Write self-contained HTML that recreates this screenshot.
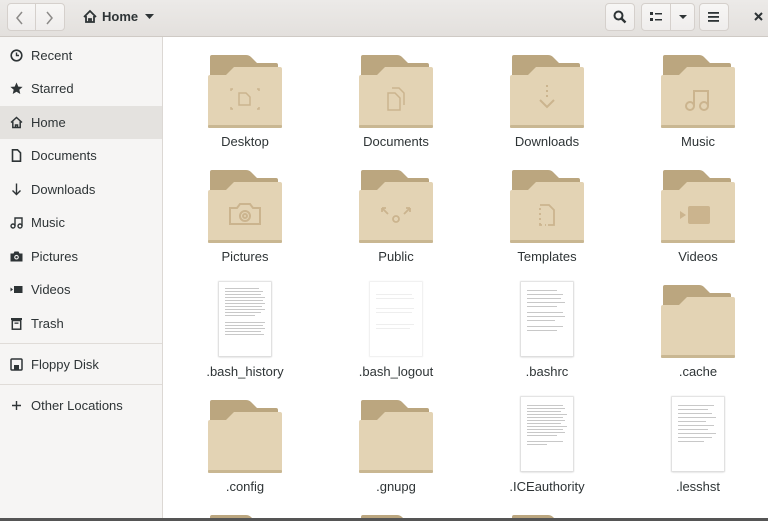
<!DOCTYPE html>
<html><head><meta charset="utf-8"><style>
*{margin:0;padding:0;box-sizing:border-box}
html,body{width:768px;height:521px;overflow:hidden}
body{background:#fff;font-family:"Liberation Sans",sans-serif;color:#2e3436}
#wrap{position:relative;width:768px;height:521px;overflow:hidden}
#hb{position:absolute;left:0;top:0;width:768px;height:37px;background:linear-gradient(#eceae8,#e3e0dd);border-bottom:1px solid #cfcac5}
.btn{position:absolute;top:3px;height:28px;background:linear-gradient(#f7f6f5,#efedec);border:1px solid #d5d0cc;border-radius:4px}
#side{position:absolute;left:0;top:37px;width:163px;height:482px;background:#f6f5f4;border-right:1px solid #dcd8d4}
.si{position:absolute;left:0;width:162px;height:33px;font-size:13px;line-height:33px;padding-left:31px;color:#2e3436}
.si svg{position:absolute;left:10px;top:10px}
.sep{position:absolute;left:0;width:162px;height:1px;background:#e0dcd8}
.it{position:absolute;width:140px;text-align:center;font-size:13px;color:#2e3436}
.f{position:absolute;width:74px;height:74px}
.doc{position:absolute;width:52px;height:74px;background:#fff;box-shadow:0 0 1px 1px #ddd,0 1px 2px #ccc}
.doc i{position:absolute;left:6px;height:1px;background:#c8c8c8}
#bot{position:absolute;left:0;top:518px;width:768px;height:3px;background:#555}
</style></head><body><div id="wrap">
<svg width="0" height="0" style="position:absolute"><defs>
<symbol id="fd" viewBox="0 0 74 74">
<path d="M4,0H38Q41,0 43,2L49,8H68Q70,8 70,10V40H2V2Q2,0 4,0Z" fill="#bba67f"/>
<path d="M0,22Q0,20 2,20H18L26,12H72Q74,12 74,14V70Q74,72 72,72H2Q0,72 0,70Z" fill="#e3d3b4"/>
<rect x="0" y="70" width="74" height="3" rx="1" fill="#c9b792"/>
</symbol></defs></svg>

<div id="hb">
<div class="btn" style="left:7px;width:58px"></div>
<div style="position:absolute;left:35px;top:4px;width:1px;height:26px;background:#d5d0cc"></div>
<svg style="position:absolute;left:14px;top:11px" width="12" height="14"><path d="M8,1L3,7L8,13" stroke="#8c8a88" stroke-width="1.5" fill="none"/></svg>
<svg style="position:absolute;left:44px;top:11px" width="12" height="14"><path d="M3,1L8,7L3,13" stroke="#8c8a88" stroke-width="1.5" fill="none"/></svg>
<svg style="position:absolute;left:82px;top:9px" width="16" height="15"><path d="M2,8L8,2L14,8M4,7V13H12V7M7,13V10H9V13" stroke="#2e3436" stroke-width="1.8" fill="none"/></svg>
<div style="position:absolute;left:102px;top:9px;font-size:13px;font-weight:bold;color:#2e3436">Home</div>
<svg style="position:absolute;left:145px;top:14px" width="10" height="6"><path d="M0,0H9L4.5,5Z" fill="#2e3436"/></svg>
<div class="btn" style="left:605px;width:30px"></div>
<svg style="position:absolute;left:613px;top:10px" width="14" height="14"><circle cx="5.5" cy="5.5" r="4" stroke="#2e3436" stroke-width="2" fill="none"/><path d="M8.5,8.5L12.5,12.5" stroke="#2e3436" stroke-width="2.4"/></svg>
<div class="btn" style="left:641px;width:54px"></div>
<div style="position:absolute;left:670px;top:4px;width:1px;height:26px;background:#d5d0cc"></div>
<svg style="position:absolute;left:650px;top:12px" width="14" height="10"><rect x="0" y="0" width="3" height="3" fill="#2e3436"/><rect x="0" y="6" width="3" height="3" fill="#2e3436"/><rect x="5" y="1" width="7" height="1.5" fill="#2e3436"/><rect x="5" y="7" width="7" height="1.5" fill="#2e3436"/></svg>
<svg style="position:absolute;left:679px;top:15px" width="10" height="6"><path d="M0,0H8L4,4Z" fill="#2e3436"/></svg>
<div class="btn" style="left:699px;width:30px"></div>
<svg style="position:absolute;left:708px;top:12px" width="12" height="10"><rect x="0" y="0" width="11" height="1.8" fill="#2e3436"/><rect x="0" y="4" width="11" height="1.8" fill="#2e3436"/><rect x="0" y="8" width="11" height="1.8" fill="#2e3436"/></svg>
<svg style="position:absolute;left:754px;top:12px" width="10" height="10"><path d="M1,1L8,8M8,1L1,8" stroke="#2e3436" stroke-width="2"/></svg>
</div>

<div id="side">
<div class="si" style="top:2px"><svg width="13" height="13"><circle cx="6.5" cy="6.5" r="5.3" stroke="#2e3436" stroke-width="1.6" fill="none"/><path d="M6.5,3.5V6.5H9" stroke="#2e3436" stroke-width="1.4" fill="none"/></svg>Recent</div>
<div class="si" style="top:35px"><svg width="13" height="13"><path d="M6.5,0.5L8.3,4.6L12.6,4.9L9.3,7.7L10.3,12L6.5,9.7L2.7,12L3.7,7.7L0.4,4.9L4.7,4.6Z" fill="#2e3436"/></svg>Starred</div>
<div class="si" style="top:69px;background:#e4e2df"><svg width="13" height="13"><path d="M1,6.5L6.5,1.5L12,6.5M2.8,5.5V11.5H10.2V5.5M5.5,11.5V9H7.5V11.5" stroke="#2e3436" stroke-width="1.5" fill="none"/></svg>Home</div>
<div class="si" style="top:102px"><svg width="13" height="13"><path d="M2.5,0.8H7.5L10.5,3.8V12.2H2.5Z" stroke="#2e3436" stroke-width="1.6" fill="none"/></svg>Documents</div>
<div class="si" style="top:136px"><svg width="13" height="13"><path d="M6.5,0.5V11M2.5,7.5L6.5,11.5L10.5,7.5" stroke="#2e3436" stroke-width="1.4" fill="none"/></svg>Downloads</div>
<div class="si" style="top:169px"><svg width="13" height="13"><circle cx="3" cy="10" r="2" stroke="#2e3436" stroke-width="1.4" fill="none"/><circle cx="10" cy="10" r="2" stroke="#2e3436" stroke-width="1.4" fill="none"/><path d="M5,10V2H12V10" stroke="#2e3436" stroke-width="1.4" fill="none"/></svg>Music</div>
<div class="si" style="top:203px"><svg width="13" height="13"><path d="M0.5,3.5H3.5L4.5,1.5H8.5L9.5,3.5H12.5V11.5H0.5Z" fill="#2e3436"/><circle cx="6.5" cy="7.2" r="2.3" fill="#f6f5f4"/><circle cx="6.5" cy="7.2" r="1.2" fill="#2e3436"/></svg>Pictures</div>
<div class="si" style="top:236px"><svg width="13" height="13"><path d="M0.5,4.5L3,6.5L0.5,8.5Z" fill="#2e3436"/><rect x="4" y="3" width="8.5" height="7" fill="#2e3436"/></svg>Videos</div>
<div class="si" style="top:270px"><svg width="13" height="13"><rect x="1" y="1" width="11" height="2" fill="#2e3436"/><rect x="2.3" y="3.5" width="8.4" height="8.7" stroke="#2e3436" stroke-width="1.5" fill="none"/><rect x="4.5" y="5.5" width="4" height="1.3" fill="#2e3436"/></svg>Trash</div>
<div class="sep" style="top:306px"></div>
<div class="si" style="top:311px"><svg width="13" height="13"><rect x="1" y="1" width="11" height="11" rx="1" stroke="#2e3436" stroke-width="1.5" fill="none"/><rect x="4" y="7" width="5" height="5" fill="#2e3436"/></svg>Floppy Disk</div>
<div class="sep" style="top:347px"></div>
<div class="si" style="top:352px"><svg width="13" height="13"><path d="M6.5,2V11M2,6.5H11" stroke="#2e3436" stroke-width="1.4"/></svg>Other Locations</div>
</div>

<svg class="f" style="left:208px;top:55px"><use href="#fd"/><g stroke="#cbb48e" stroke-width="1.5" fill="none"><path d="M31,38H38L42,42V50H31Z"/><path d="M23,36V34H25M49,34H51V36M23,52V54H25M49,54H51V52"/></g></svg>
<svg class="f" style="left:359px;top:55px"><use href="#fd"/><g stroke="#cbb48e" stroke-width="1.5" fill="none"><path d="M29,38H36L41,43V55H29Z"/><path d="M33,33H40L45,38V50"/></g></svg>
<svg class="f" style="left:510px;top:55px"><use href="#fd"/><g stroke="#cbb48e" stroke-width="2" fill="none"><path d="M30,45L37,52L44,45"/><path d="M37,30V32M37,35V37M37,40V42" /></g></svg>
<svg class="f" style="left:661px;top:55px"><use href="#fd"/><g stroke="#cbb48e" stroke-width="2" fill="none"><circle cx="29" cy="51" r="4"/><circle cx="43" cy="51" r="4"/><path d="M33,51V36H47V51"/></g></svg>
<div class="it" style="left:175px;top:134px">Desktop</div>
<div class="it" style="left:326px;top:134px">Documents</div>
<div class="it" style="left:477px;top:134px">Downloads</div>
<div class="it" style="left:628px;top:134px">Music</div>

<svg class="f" style="left:208px;top:170px"><use href="#fd"/><g stroke="#cbb48e" stroke-width="2" fill="none"><path d="M22,38H29L32,34H42L45,38H52V54H22Z"/><circle cx="37" cy="46" r="5"/><circle cx="37" cy="46" r="2"/></g></svg>
<svg class="f" style="left:359px;top:170px"><use href="#fd"/><g stroke="#cbb48e" stroke-width="1.8" fill="none"><circle cx="37" cy="49" r="3"/><path d="M23,38L29,44M23,38H27M23,38V42M51,38L45,44M51,38H47M51,38V42"/></g></svg>
<svg class="f" style="left:510px;top:170px"><use href="#fd"/><g stroke="#cbb48e" stroke-width="1.8" fill="none"><path d="M30,35H39L44,40V55H38"/><path d="M30,38V40M30,43V45M30,48V50M30,53V55H32M35,55H36" /></g></svg>
<svg class="f" style="left:661px;top:170px"><use href="#fd"/><path d="M19,41L25,45L19,49Z" fill="#cbb48e"/><rect x="27" y="36" width="22" height="18" rx="2" fill="#cbb48e"/></svg>
<div class="it" style="left:175px;top:249px">Pictures</div>
<div class="it" style="left:326px;top:249px">Public</div>
<div class="it" style="left:477px;top:249px">Templates</div>
<div class="it" style="left:628px;top:249px">Videos</div>

<div class="doc" style="left:219px;top:282px"><i style="top:6px;width:34px"></i><i style="top:9px;width:38px"></i><i style="top:12px;width:36px"></i><i style="top:15px;width:40px"></i><i style="top:18px;width:38px"></i><i style="top:21px;width:40px"></i><i style="top:24px;width:37px"></i><i style="top:27px;width:40px"></i><i style="top:30px;width:36px"></i><i style="top:33px;width:30px"></i><i style="top:40px;width:40px"></i><i style="top:43px;width:38px"></i><i style="top:46px;width:40px"></i><i style="top:49px;width:36px"></i><i style="top:52px;width:39px"></i></div>
<div class="doc" style="left:370px;top:282px;box-shadow:0 0 1px 1px #eee"><i style="top:12px;width:36px;background:#eee"></i><i style="top:16px;width:38px;background:#eee"></i><i style="top:26px;width:38px;background:#eee"></i><i style="top:30px;width:36px;background:#eee"></i><i style="top:42px;width:38px;background:#eee"></i><i style="top:46px;width:34px;background:#eee"></i></div>
<div class="doc" style="left:521px;top:282px"><i style="top:8px;width:30px"></i><i style="top:12px;width:36px"></i><i style="top:16px;width:34px"></i><i style="top:20px;width:38px"></i><i style="top:24px;width:30px"></i><i style="top:30px;width:36px"></i><i style="top:34px;width:38px"></i><i style="top:38px;width:28px"></i><i style="top:44px;width:36px"></i><i style="top:48px;width:30px"></i></div>
<svg class="f" style="left:661px;top:285px"><use href="#fd"/></svg>
<div class="it" style="left:175px;top:364px">.bash_history</div>
<div class="it" style="left:326px;top:364px">.bash_logout</div>
<div class="it" style="left:477px;top:364px">.bashrc</div>
<div class="it" style="left:628px;top:364px">.cache</div>

<svg class="f" style="left:208px;top:400px"><use href="#fd"/></svg>
<svg class="f" style="left:359px;top:400px"><use href="#fd"/></svg>
<div class="doc" style="left:521px;top:397px"><i style="top:8px;width:36px"></i><i style="top:11px;width:38px"></i><i style="top:14px;width:34px"></i><i style="top:17px;width:40px"></i><i style="top:20px;width:36px"></i><i style="top:23px;width:38px"></i><i style="top:26px;width:34px"></i><i style="top:29px;width:40px"></i><i style="top:32px;width:36px"></i><i style="top:35px;width:38px"></i><i style="top:38px;width:30px"></i><i style="top:44px;width:36px"></i><i style="top:47px;width:20px"></i></div>
<div class="doc" style="left:672px;top:397px"><i style="top:8px;width:36px"></i><i style="top:12px;width:30px"></i><i style="top:16px;width:34px"></i><i style="top:20px;width:38px"></i><i style="top:24px;width:28px"></i><i style="top:28px;width:36px"></i><i style="top:32px;width:30px"></i><i style="top:36px;width:38px"></i><i style="top:40px;width:34px"></i><i style="top:44px;width:26px"></i></div>
<div class="it" style="left:175px;top:479px">.config</div>
<div class="it" style="left:326px;top:479px">.gnupg</div>
<div class="it" style="left:477px;top:479px">.ICEauthority</div>
<div class="it" style="left:628px;top:479px">.lesshst</div>

<svg class="f" style="left:208px;top:515px"><use href="#fd"/></svg>
<svg class="f" style="left:359px;top:515px"><use href="#fd"/></svg>
<svg class="f" style="left:510px;top:515px"><use href="#fd"/></svg>
<div id="bot"></div>
</div></body></html>
